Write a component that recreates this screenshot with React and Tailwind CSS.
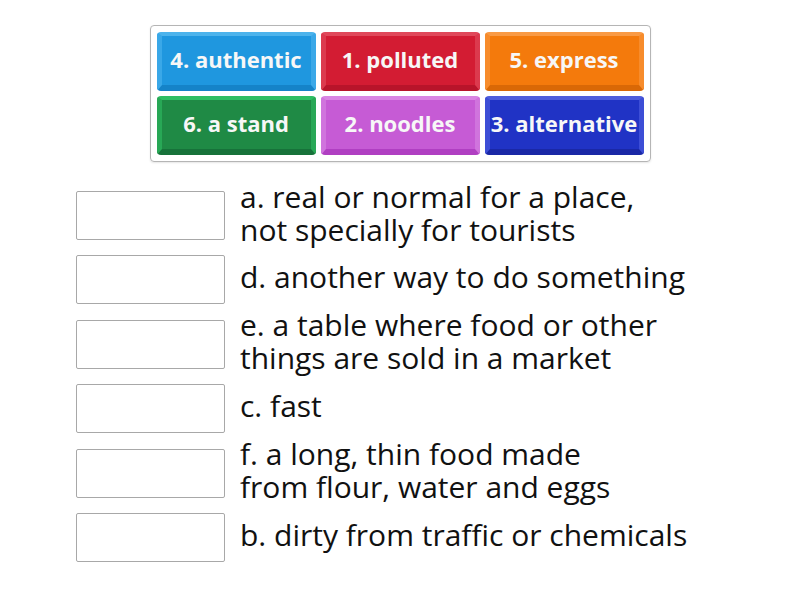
import React from "react";

const tiles = [
  { label: "4. authentic", cls: "bg-[#1f97df] border-t-[#4cb3ec] border-x-[#3aa8e8] border-b-[#1583c8]" },
  { label: "1. polluted", cls: "bg-[#d31c33] border-t-[#e0485a] border-x-[#dc3a4e] border-b-[#b8142a]" },
  { label: "5. express", cls: "bg-[#f47a0c] border-t-[#f99a45] border-x-[#f78c2c] border-b-[#d96806]" },
  { label: "6. a stand", cls: "bg-[#1f8a45] border-t-[#2ebe63] border-x-[#28a856] border-b-[#17723a]" },
  { label: "2. noodles", cls: "bg-[#c65bd5] border-t-[#d985e3] border-x-[#d074dd] border-b-[#b03fc2]" },
  { label: "3. alternative", cls: "bg-[#2033c5] border-t-[#4d5ddc] border-x-[#3d4ed6] border-b-[#1a28a6]" },
];

const rows = [
  ["a. real or normal for a place,", "not specially for tourists"],
  ["d. another way to do something"],
  ["e. a table where food or other", "things are sold in a market"],
  ["c. fast"],
  ["f. a long, thin food made", "from flour, water and eggs"],
  ["b. dirty from traffic or chemicals"],
];

export default function App() {
  return (
    <div className="w-[800px] h-[600px] bg-white font-['Open_Sans',sans-serif] text-[#111]">
      <div className="pt-[25px] flex justify-center">
        <div className="w-[501px] border border-[#b5b5b5] rounded-[4px] p-[6px] grid grid-cols-3 gap-x-[5px] gap-y-[5px] shadow-[0_1px_2px_rgba(0,0,0,0.1)]">
          {tiles.map((t) => (
            <div
              key={t.label}
              className={
                "h-[59px] rounded-[4px] border-t-[4px] border-x-[5px] border-b-[6px] flex items-center justify-center text-[#f7f7f7] text-[22px] font-bold whitespace-nowrap " +
                t.cls
              }
            >
              <span className="-mt-[2px]">{t.label}</span>
            </div>
          ))}
        </div>
      </div>
      <div className="pl-[76px] pt-[29px] flex flex-col gap-[15.4px]">
        {rows.map((r, i) => (
          <div key={i} className="flex items-center h-[49px]">
            <div className="w-[149px] h-[49px] border border-[#a8a8a8] rounded-[2px] bg-white shrink-0" />
            <div className="ml-[15px] text-[30px] leading-[33px] whitespace-nowrap -mt-[6px]">
              {r.map((line, j) => (
                <div key={j}>{line}</div>
              ))}
            </div>
          </div>
        ))}
      </div>
    </div>
  );
}
